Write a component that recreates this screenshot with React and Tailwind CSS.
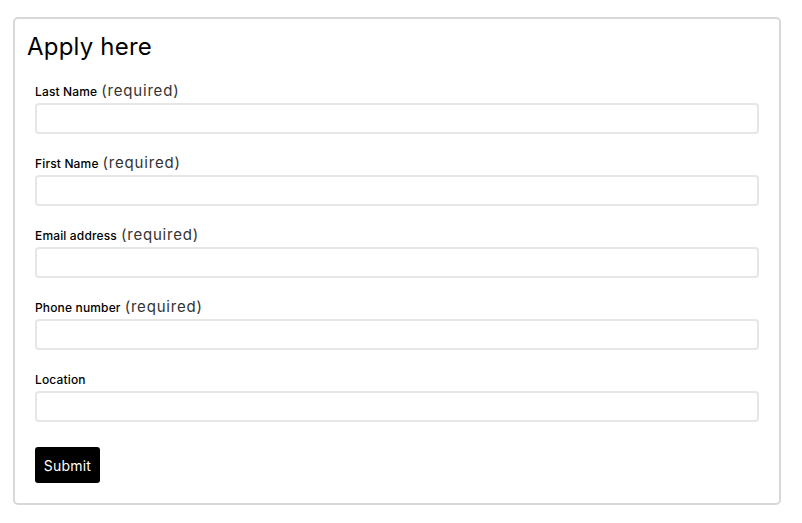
export default function App() {
  const fields = [
    { label: "Last Name", req: true },
    { label: "First Name", req: true },
    { label: "Email address", req: true },
    { label: "Phone number", req: true },
    { label: "Location", req: false },
  ];
  return (
    <div className="w-[802px] h-[523px] bg-white pt-[17px] pl-[13px]" style={{ fontFamily: "Inter, 'Open Sans', sans-serif" }}>
      <div className="w-[768px] h-[488px] border-2 border-[#d8d8d8] rounded-[5px] pt-[12px]">
        <h1 className="pl-[12px] text-[24px] leading-[32px] text-black font-normal tracking-[0.2px]">Apply here</h1>
        <div className="px-[20px]">
          {fields.map((f, i) => (
            <div key={f.label} className={i === 0 ? "mt-[17px]" : "mt-[18px]"}>
              <div className="h-[21px] mb-[2px] flex items-end">
                <span className="text-[12px] leading-[16px] text-black font-medium mb-[1px] tracking-[0.15px]">{f.label}</span>
                {f.req && (
                  <span className="text-[15px] leading-[20px] text-[#333] ml-[4px] tracking-[0.8px]">(required)</span>
                )}
              </div>
              <input className="block w-full h-[31px] border-2 border-[#e6e6e6] rounded-[4px] outline-none" />
            </div>
          ))}
          <button className="mt-[25px] h-[36px] w-[65px] bg-black text-white text-[14px] rounded-[3px] tracking-[0.2px]">Submit</button>
        </div>
      </div>
    </div>
  );
}
